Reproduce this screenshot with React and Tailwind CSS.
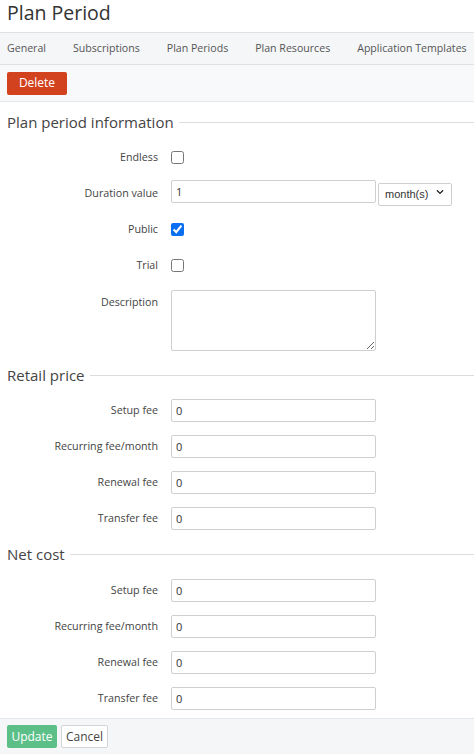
import { FaChevronDown } from "react-icons/fa";

const tabs = ["General", "Subscriptions", "Plan Periods", "Plan Resources", "Application Templates"];
const fees = ["Setup fee", "Recurring fee/month", "Renewal fee", "Transfer fee"];

function SectionTitle({ children, top = "pt-[6px]", bottom = "pb-[6px]" }) {
    return (
        <div className={`flex items-center gap-[5px] pl-[7px] ${top} ${bottom}`}>
            <h2 className="text-[15px] leading-[22px] text-[#444]">{children}</h2>
            <div className="h-px flex-1 bg-[#dcdcdc]" />
        </div>
    );
}

function Row({ label, children, align = "items-center", labelPad = "" }) {
    return (
        <div className={`flex min-h-[36px] ${align} gap-[13px]`}>
            <label className={`w-[158px] shrink-0 text-right text-[10.7px] leading-[15px] text-[#444] ${labelPad}`}>{label}</label>
            {children}
        </div>
    );
}

function TextInput({ value }) {
    return (
        <input
            type="text"
            defaultValue={value}
            className="h-[23px] w-[205px] rounded-[2px] border border-[#cfcfcf] bg-white px-[4px] text-[11px] text-[#333] outline-none"
        />
    );
}

function Check({ checked = false }) {
    return <input type="checkbox" defaultChecked={checked} className="m-0 h-[13px] w-[13px] accent-[#0a6ff0]" />;
}

export default function App() {
    return (
        <div className="min-h-[754px] w-[474px] overflow-hidden bg-white font-['Open_Sans',sans-serif]">
            {/* Header */}
            <h1 className="h-[32px] pl-[7px] text-[19.5px] leading-[26px] text-[#333]">Plan Period</h1>

            {/* Tabs */}
            <nav className="flex h-[33px] items-center gap-[27px] border-y border-[#dde2e7] bg-[#f4f6f8] pl-[7px] text-[10.6px] whitespace-nowrap text-[#555]">
                {tabs.map((t) => (
                    <span key={t}>{t}</span>
                ))}
            </nav>

            {/* Toolbar */}
            <div className="flex h-[37px] items-center border-b border-[#e3e6ea] bg-[#f8f9fb] pl-[7px]">
                <button className="h-[23px] w-[60px] rounded-[2px] bg-[#d3421f] text-[12px] text-white">Delete</button>
            </div>

            <SectionTitle top="pt-[9px]">Plan period information</SectionTitle>
            <Row label="Endless">
                <Check />
            </Row>
            <Row label="Duration value">
                <div className="flex gap-[2px]">
                    <TextInput value="1" />
                    <div className="relative">
                        <select className="h-[23px] w-[74px] appearance-none rounded-[2px] border border-[#cfcfcf] bg-white pl-[6px] font-['Liberation_Sans',Arial,sans-serif] text-[11px] text-[#333] outline-none">
                            <option>month(s)</option>
                        </select>
                        <FaChevronDown className="pointer-events-none absolute top-[8px] right-[8px] h-[8px] w-[8px] text-[#222]" />
                    </div>
                </div>
            </Row>
            <Row label="Public">
                <Check checked />
            </Row>
            <Row label="Trial">
                <Check />
            </Row>
            <Row label="Description" align="items-start" labelPad="pt-[12px]">
                <textarea className="my-[7px] h-[61px] w-[205px] rounded-[2px] border border-[#cfcfcf] bg-white px-[4px] text-[11px] outline-none" />
            </Row>

            <SectionTitle>Retail price</SectionTitle>
            {fees.map((f) => (
                <Row key={f} label={f}>
                    <TextInput value="0" />
                </Row>
            ))}

            <SectionTitle top="pt-[7px]" bottom="pb-[7px]">Net cost</SectionTitle>
            {fees.map((f) => (
                <Row key={f} label={f}>
                    <TextInput value="0" />
                </Row>
            ))}

            {/* Footer */}
            <div className="mt-[2px] flex h-[36px] items-center gap-[4px] border-t border-[#e3e6ea] bg-[#f4f6f8] pl-[7px]">
                <button className="h-[23px] w-[50px] rounded-[2px] bg-[#5cbf88] text-[12px] text-white">Update</button>
                <button className="h-[23px] w-[47px] rounded-[2px] border border-[#d5d5d5] bg-white text-[12px] text-[#444]">Cancel</button>
            </div>
        </div>
    );
}
